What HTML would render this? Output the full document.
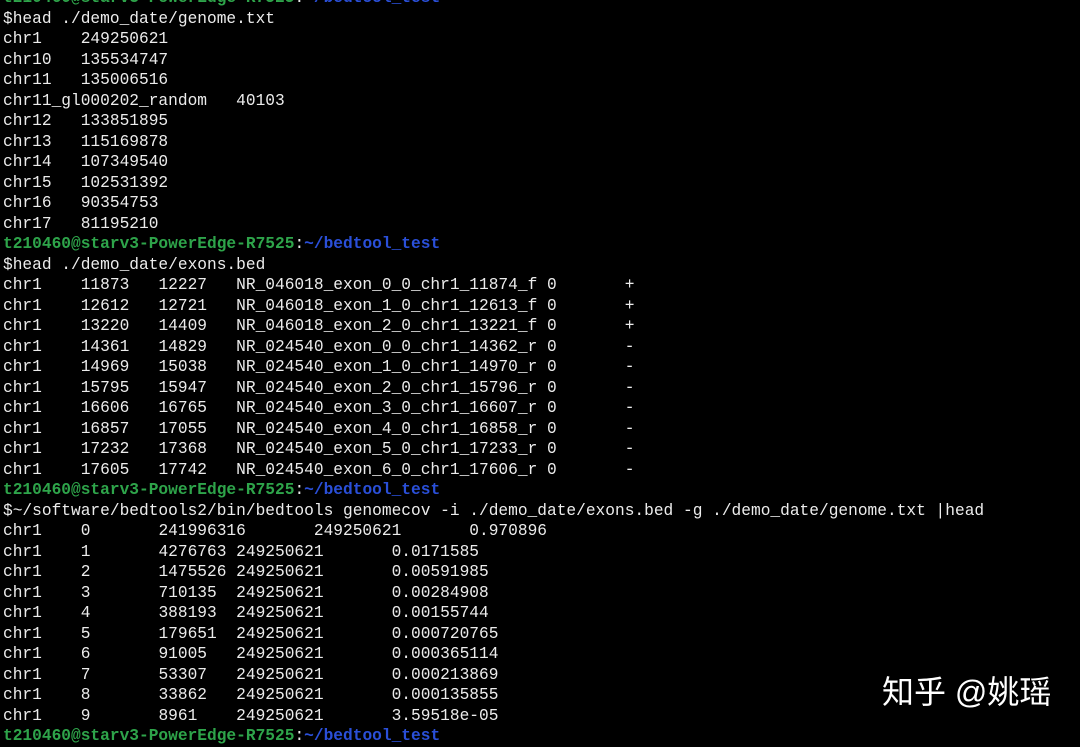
<!DOCTYPE html>
<html><head><meta charset="utf-8"><style>
html,body{margin:0;padding:0;background:#000;width:1080px;height:734px;overflow:hidden}
pre{position:absolute;left:3px;top:-12px;margin:0;font-family:"Liberation Mono",monospace;font-size:16.2px;line-height:20.5px;color:#ececec;tab-size:8;-moz-tab-size:8;white-space:pre}
.g{color:#2ea44a;font-weight:bold}.b{color:#2a4fd8;font-weight:bold}
.w{position:absolute;left:882px;top:667px;font-family:"Liberation Sans","Noto Sans CJK SC",sans-serif;font-size:32px;color:#fff;letter-spacing:0px}
</style></head><body>
<pre><span class="g">t210460@starv3-PowerEdge-R7525</span>:<span class="b">~/bedtool_test</span>
$head ./demo_date/genome.txt
chr1	249250621
chr10	135534747
chr11	135006516
chr11_gl000202_random	40103
chr12	133851895
chr13	115169878
chr14	107349540
chr15	102531392
chr16	90354753
chr17	81195210
<span class="g">t210460@starv3-PowerEdge-R7525</span>:<span class="b">~/bedtool_test</span>
$head ./demo_date/exons.bed
chr1	11873	12227	NR_046018_exon_0_0_chr1_11874_f	0	+
chr1	12612	12721	NR_046018_exon_1_0_chr1_12613_f	0	+
chr1	13220	14409	NR_046018_exon_2_0_chr1_13221_f	0	+
chr1	14361	14829	NR_024540_exon_0_0_chr1_14362_r	0	-
chr1	14969	15038	NR_024540_exon_1_0_chr1_14970_r	0	-
chr1	15795	15947	NR_024540_exon_2_0_chr1_15796_r	0	-
chr1	16606	16765	NR_024540_exon_3_0_chr1_16607_r	0	-
chr1	16857	17055	NR_024540_exon_4_0_chr1_16858_r	0	-
chr1	17232	17368	NR_024540_exon_5_0_chr1_17233_r	0	-
chr1	17605	17742	NR_024540_exon_6_0_chr1_17606_r	0	-
<span class="g">t210460@starv3-PowerEdge-R7525</span>:<span class="b">~/bedtool_test</span>
$~/software/bedtools2/bin/bedtools genomecov -i ./demo_date/exons.bed -g ./demo_date/genome.txt |head
chr1	0	241996316	249250621	0.970896
chr1	1	4276763	249250621	0.0171585
chr1	2	1475526	249250621	0.00591985
chr1	3	710135	249250621	0.00284908
chr1	4	388193	249250621	0.00155744
chr1	5	179651	249250621	0.000720765
chr1	6	91005	249250621	0.000365114
chr1	7	53307	249250621	0.000213869
chr1	8	33862	249250621	0.000135855
chr1	9	8961	249250621	3.59518e-05
<span class="g">t210460@starv3-PowerEdge-R7525</span>:<span class="b">~/bedtool_test</span></pre>
<div class="w">知乎 @姚瑶</div>
</body></html>
